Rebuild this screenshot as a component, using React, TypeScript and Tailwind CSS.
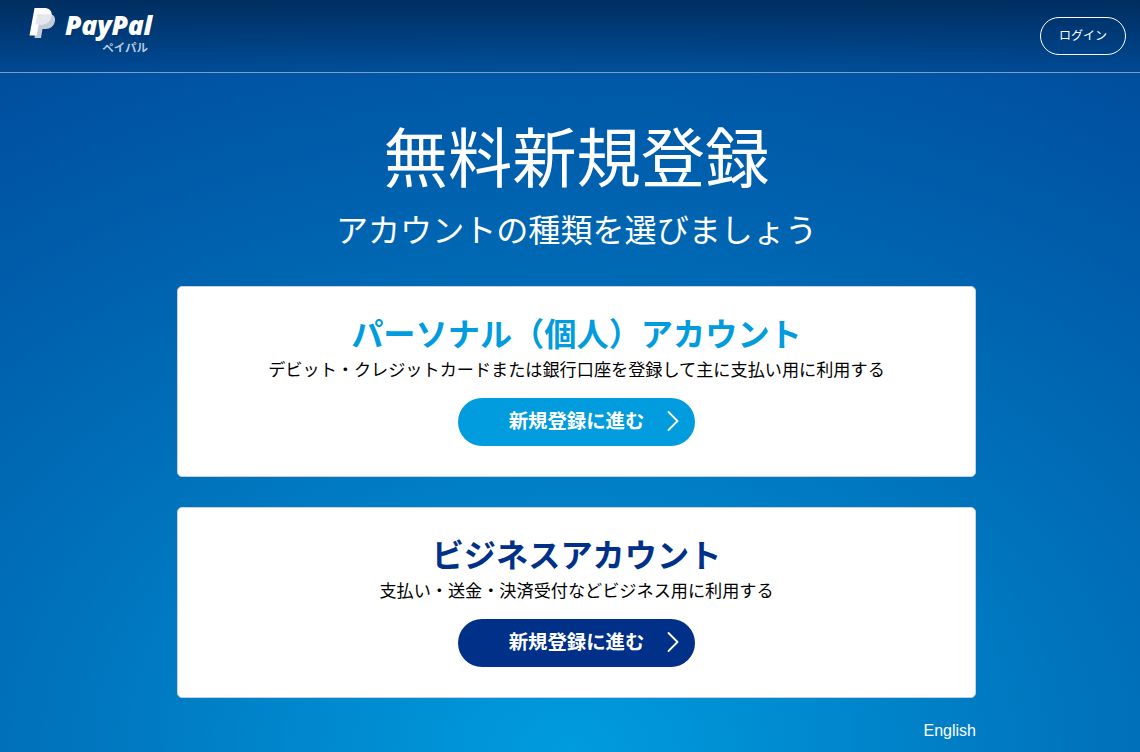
import { ChevronRight } from "lucide-react";

const jp = "font-['Liberation_Sans','Noto_Sans_CJK_JP',sans-serif]";

function PayPalMark() {
  return (
    <svg viewBox="0 0 27 31" className="mt-[2px] h-[31px] w-[27px]">
      <path
        d="M9 6h11c4 0 6.500 2.500 6 6.500C25.300 18 21.500 21 16.500 21h-3l-1.500 9H5.500z"
        fill="#c3ccd8"
      />
      <path
        d="M5.500 0h9.500c5 0 8.300 2.600 7.600 7.300C21.800 13 18 16.500 12.500 16.500H9.800L7.700 27.500H0.500z"
        fill="#ffffff"
      />
      <path
        d="M8.300 6.300h12.700c1 0 1.500 0 1.600 1C21.800 13 18 16.500 12.500 16.500H6.300z"
        fill="#e4e8ee"
      />
    </svg>
  );
}

function Logo() {
  return (
    <div className="flex items-start gap-[9px]">
      <PayPalMark />
      <div className="flex flex-col items-end">
        <span className="mt-[5px] font-['Open_Sans',sans-serif] text-[26.5px] leading-[28px] font-extrabold tracking-[-0.2px] text-white italic">
          PayPal
        </span>
        <span className="mt-[3px] mr-[4px] text-[11.5px] leading-[12px] font-bold text-[#b9cbe2]">
          ペイパル
        </span>
      </div>
    </div>
  );
}

function AccountCard({
  title,
  description,
  titleColor,
  buttonColor,
}: {
  title: string;
  description: string;
  titleColor: string;
  buttonColor: string;
}) {
  return (
    <section className="flex h-[191px] w-[799px] flex-col items-center rounded-[5px] border border-[#c8d0da] bg-white pt-6">
      <h2 className={`text-[32.2px] leading-[48px] font-bold ${titleColor}`}>{title}</h2>
      <p className="mt-[-1px] text-[17.15px] leading-[24px] text-black">{description}</p>
      <a
        href="#"
        className={`relative mt-4 flex h-12 w-[237px] items-center justify-center rounded-full text-[19.4px] font-bold text-white ${buttonColor}`}
      >
        <span>新規登録に進む</span>
        <ChevronRight className="absolute top-[5px] right-[4px] h-9 w-9" strokeWidth={1.2} />
      </a>
    </section>
  );
}

export default function App() {
  return (
    <div
      className={`flex h-[752px] w-full flex-col overflow-hidden bg-[radial-gradient(ellipse_1250px_900px_at_50%_100%,#009cde_0%,#0070ba_45%,#0050a0_85%,#004a98_100%)] ${jp}`}
    >
      <header className="flex h-[73px] shrink-0 items-center justify-between border-b border-[#7f9cc4] bg-[linear-gradient(to_bottom,rgba(0,40,85,0.85),rgba(0,40,85,0.15))] pr-[14px] pl-[29px]">
        <div className="mt-[-13px]">
          <Logo />
        </div>
        <a
          href="#"
          className="mt-[-1px] flex h-[38px] w-[86px] items-center justify-center rounded-full border border-white text-xs font-normal text-white"
        >
          ログイン
        </a>
      </header>
      <main className="flex flex-col items-center pl-[13px]">
        <h1 className="mt-[39px] text-[64.3px] leading-[96px] font-normal text-white">無料新規登録</h1>
        <p className="mt-[-1px] text-[32.1px] leading-[48px] text-white">アカウントの種類を選びましょう</p>
        <div className="mt-[31px] flex flex-col gap-[30px]">
          <AccountCard
            title="パーソナル（個人）アカウント"
            description="デビット・クレジットカードまたは銀行口座を登録して主に支払い用に利用する"
            titleColor="text-[#009cde]"
            buttonColor="bg-[#009cde]"
          />
          <AccountCard
            title="ビジネスアカウント"
            description="支払い・送金・決済受付などビジネス用に利用する"
            titleColor="text-[#003087]"
            buttonColor="bg-[#003087]"
          />
        </div>
        <div className="mt-[21px] flex w-[799px] justify-end text-base leading-[24px] text-white">
          <a href="#">English</a>
        </div>
      </main>
    </div>
  );
}
